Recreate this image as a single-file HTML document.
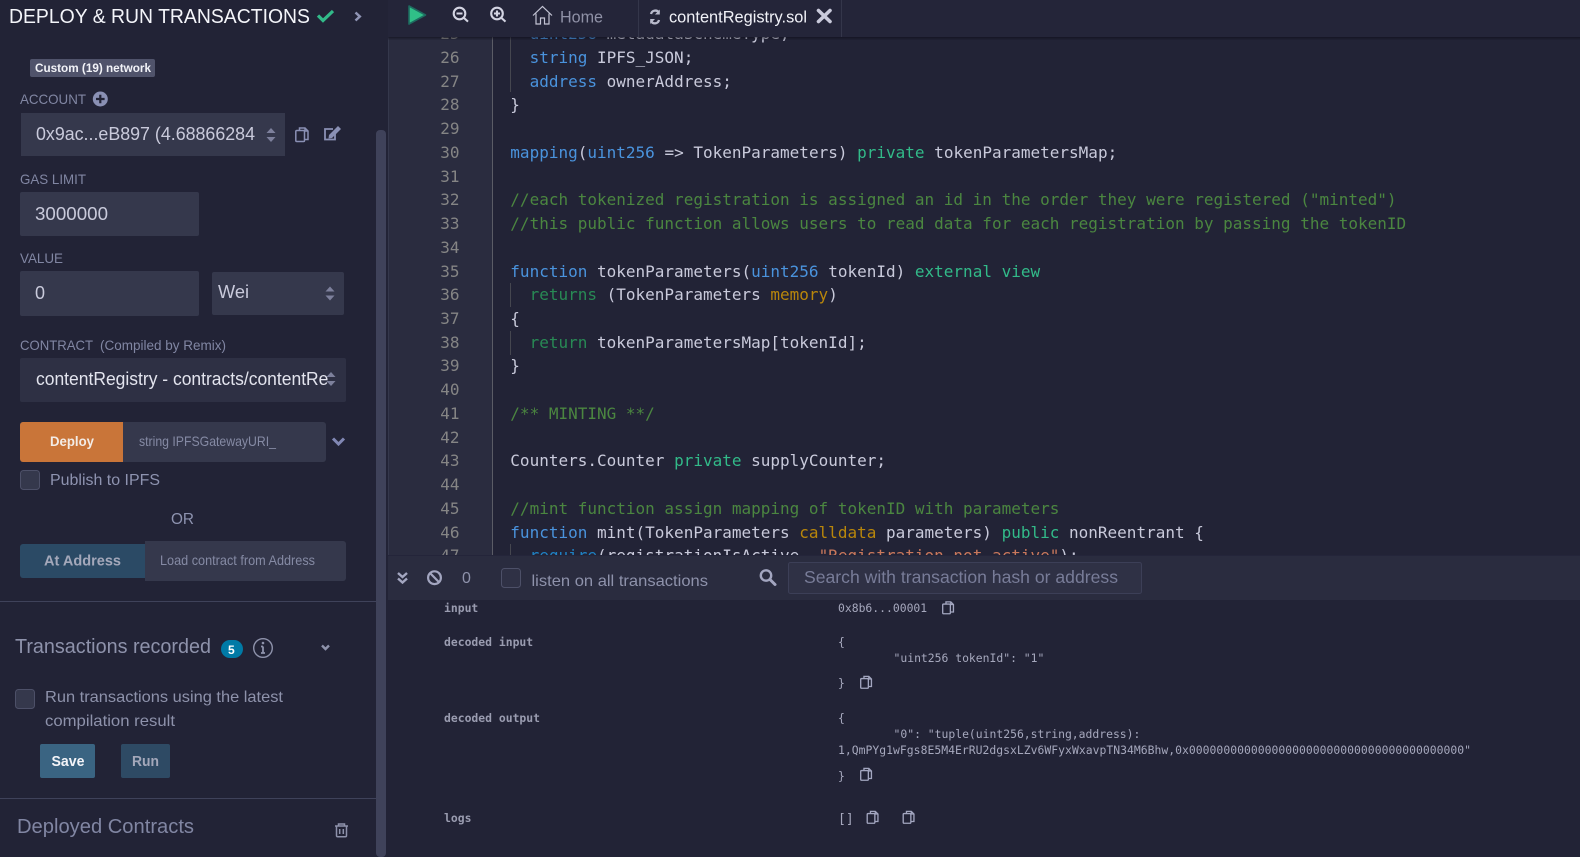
<!DOCTYPE html>
<html lang="en"><head><meta charset="utf-8"><title>Remix - Deploy &amp; Run Transactions</title>
<style>
html,body{margin:0;padding:0;background:#222336;width:1580px;height:857px;overflow:hidden}
.abs{position:absolute}
#gutter{left:388px;top:0;width:103px;height:556px;background:#2a2c3f;border-right:1px solid #5b5c66;border-left:1px solid #35384c;box-sizing:content-box}
#codewrap{left:389px;top:37px;width:1191px;height:519px;overflow:hidden}
#nums{position:absolute;left:0;top:-14.8px;width:70.5px;text-align:right;color:#858585}
#code{position:absolute;left:121.3px;top:-14.8px;color:#c9cadb}
pre{margin:0;font:16px/23.73px "DejaVu Sans Mono","Liberation Mono",monospace;white-space:pre}
.k{color:#4a93dd}.g{color:#32ba89}.r{color:#288a55}.m{color:#b8860b}.c{color:#4b8640}.s{color:#c9785c}.q{color:#1f82c4}
#guides i{position:absolute;left:510px;width:1px;background:#45464f}
svg{position:absolute;left:0;top:0}
text{font-family:"Liberation Sans",sans-serif;white-space:pre}
.mono{font-family:"DejaVu Sans Mono","Liberation Mono",monospace;font-size:11.4px;fill:#a6a8bd}
.lab{font-weight:bold;fill:#9a9cb0}
.l{fill:#8186a3;font-size:14px}
</style></head><body>
<div class="abs" id="gutter"></div>
<div id="guides"><i style="top:37px;height:55px"></i><i style="top:283px;height:24px"></i><i style="top:331px;height:24px"></i><i style="top:544px;height:12px"></i></div>
<div class="abs" id="codewrap">
<pre id="nums">25
26
27
28
29
30
31
32
33
34
35
36
37
38
39
40
41
42
43
44
45
46
47</pre>
<pre id="code">  <span class="k">uint256</span> metadataSchemeType;
  <span class="k">string</span> IPFS_JSON;
  <span class="k">address</span> ownerAddress;
}

<span class="k">mapping</span>(<span class="k">uint256</span> =&gt; TokenParameters) <span class="g">private</span> tokenParametersMap;

<span class="c">//each tokenized registration is assigned an id in the order they were registered ("minted")</span>
<span class="c">//this public function allows users to read data for each registration by passing the tokenID</span>

<span class="k">function</span> tokenParameters(<span class="k">uint256</span> tokenId) <span class="g">external</span> <span class="g">view</span>
  <span class="r">returns</span> (TokenParameters <span class="m">memory</span>)
{
  <span class="r">return</span> tokenParametersMap[tokenId];
}

<span class="c">/** MINTING **/</span>

Counters.Counter <span class="g">private</span> supplyCounter;

<span class="c">//mint function assign mapping of tokenID with parameters</span>
<span class="k">function</span> mint(TokenParameters <span class="m">calldata</span> parameters) <span class="g">public</span> nonReentrant {
  <span class="q">require</span>(registrationIsActive, <span class="s">"Registration not active"</span>);</pre>
</div>
<svg width="1580" height="857" viewBox="0 0 1580 857">
<defs>
<g id="cp" fill="none" stroke-width="1.5"><path d="M4.5 3.5V1h5.5l3 3v8.5H9.5"/><rect x=".8" y="3.5" width="8.7" height="11" rx="1"/><path d="M10 1v3h3"/></g>
<g id="ud"><path d="M-4.5 -2L0 -7L4.5 -2Z M-4.5 2L0 7L4.5 2Z"/></g>
</defs>

<!-- top bar -->
<rect x="388" y="0" width="1192" height="37" fill="#242539"/>
<rect x="388" y="37" width="1192" height="1" fill="#0c0c18" fill-opacity=".5"/>
<rect x="388" y="38" width="1192" height="1" fill="#0c0c18" fill-opacity=".3"/>
<rect x="388" y="39" width="1192" height="1" fill="#0c0c18" fill-opacity=".15"/>
<rect x="638" y="0" width="1" height="37" fill="#34364a"/>
<rect x="841" y="0" width="1" height="37" fill="#34364a"/>
<path d="M409 6L425.5 15L409 24Z" fill="#30c088" stroke="#1e6b60" stroke-width="1.6" stroke-linejoin="round"/>
<g fill="none" stroke="#d3d4e2" stroke-width="2.1"><circle cx="459.5" cy="13.5" r="5.8"/><path d="M464 18l4 3.6M456.5 13.5h6"/><circle cx="497" cy="13.5" r="5.8"/><path d="M501.5 18l4 3.6M494 13.5h6M497 10.5v6"/></g>
<path d="M533 15.5L542.5 6.5L552 15.5M536 13.5V24H540.5V18H544.5V24H549V13.5" fill="none" stroke="#c3c4d4" stroke-width="1.2"/>
<text x="560" y="22.5" font-size="16.5" fill="#8f91a6" textLength="43" lengthAdjust="spacingAndGlyphs">Home</text>
<path d="M659 12.5C657 9.5 652 10 651 14M651 21C653 24.5 658 24 659 20" fill="none" stroke="#b8bacb" stroke-width="2.3"/>
<path d="M659.8 9.5V14.5H655ZM650.2 24V19H655Z" fill="#b8bacb"/>
<text x="669" y="22.5" font-size="16.5" fill="#f1f2f8" textLength="138" lengthAdjust="spacingAndGlyphs">contentRegistry.sol</text>
<path d="M818.5 10.5L830 21.5M830 10.5L818.5 21.5" stroke="#c9cadb" stroke-width="3.6" stroke-linecap="round"/>

<!-- side panel -->
<rect x="376" y="130" width="10" height="727" rx="4" fill="#3f425a"/>
<text x="9" y="23" font-size="20" fill="#f4f5fa" textLength="301" lengthAdjust="spacingAndGlyphs">DEPLOY &amp; RUN TRANSACTIONS</text>
<path d="M318 15.5L323 20.5L333 11" fill="none" stroke="#32ba89" stroke-width="3.2"/>
<path d="M355.5 12.5L359.8 16.5L355.5 20.5" fill="none" stroke="#8f94b4" stroke-width="2.5"/>

<rect x="30" y="59" width="125" height="18" rx="2" fill="#50536b"/>
<text x="35" y="72" font-size="11.5" font-weight="bold" fill="#f2f3f8" textLength="116" lengthAdjust="spacingAndGlyphs">Custom (19) network</text>

<text x="20" y="104" class="l" textLength="66" lengthAdjust="spacingAndGlyphs">ACCOUNT</text>
<circle cx="100.3" cy="99" r="7.5" fill="#8a90b4"/><path d="M96 99h8.6M100.3 94.8v8.5" stroke="#222336" stroke-width="2.2"/>
<rect x="21" y="113" width="264" height="43" fill="#35384c"/>
<text x="36" y="140" font-size="18" fill="#c9cadb" textLength="219" lengthAdjust="spacingAndGlyphs">0x9ac...eB897 (4.68866284</text>
<use href="#ud" x="271" y="135" fill="#7d809c"/>
<use href="#cp" x="295" y="127" stroke="#8a90b4"/>
<g fill="none" stroke="#8a90b4" stroke-width="1.8"><path d="M335 132v7.5h-10V129h8"/></g><path d="M329 135l9-9 3 3-9 9-3.5.5z" fill="#8a90b4"/>

<text x="20" y="184" class="l" textLength="66" lengthAdjust="spacingAndGlyphs">GAS LIMIT</text>
<rect x="20" y="192" width="179" height="44" rx="2" fill="#35384c"/>
<text x="35" y="220" font-size="18" fill="#c9cadb" textLength="73" lengthAdjust="spacingAndGlyphs">3000000</text>

<text x="20" y="263" class="l" textLength="43" lengthAdjust="spacingAndGlyphs">VALUE</text>
<rect x="20" y="271" width="179" height="45" rx="2" fill="#35384c"/>
<text x="35" y="299" font-size="18" fill="#c9cadb">0</text>
<rect x="212" y="272" width="132" height="43" rx="2" fill="#35384c"/>
<text x="218" y="298" font-size="18" fill="#c9cadb" textLength="31" lengthAdjust="spacingAndGlyphs">Wei</text>
<use href="#ud" x="330" y="293.5" fill="#7d809c"/>

<text x="20" y="350" class="l" textLength="73" lengthAdjust="spacingAndGlyphs">CONTRACT</text>
<text x="100" y="350" font-size="13.5" fill="#8186a3" textLength="126" lengthAdjust="spacingAndGlyphs">(Compiled by Remix)</text>
<rect x="20" y="358" width="326" height="44" rx="2" fill="#2e3044"/>
<svg x="36" y="358" width="292" height="44"><text x="0" y="27" font-size="18" fill="#e3e4ee" textLength="306" lengthAdjust="spacingAndGlyphs">contentRegistry - contracts/contentRegi</text></svg>
<use href="#ud" x="331" y="379" fill="#7d809c"/>

<rect x="20" y="422" width="306" height="40" rx="3" fill="#35384c"/>
<path d="M23 422H123V462H23a3 3 0 0 1-3-3V425a3 3 0 0 1 3-3Z" fill="#c97539"/>
<text x="50" y="446" font-size="14" font-weight="bold" fill="#f3ece6" textLength="44" lengthAdjust="spacingAndGlyphs">Deploy</text>
<text x="139" y="446" font-size="14" fill="#858aa4" textLength="137" lengthAdjust="spacingAndGlyphs">string IPFSGatewayURI_</text>
<path d="M333 438.5L338.5 444L344 438.5" fill="none" stroke="#8187b4" stroke-width="3"/>

<rect x="20.5" y="470.5" width="19" height="19" rx="3" fill="#35384c" stroke="#4d5068"/>
<text x="50" y="485" font-size="16" fill="#8e93b0" textLength="110" lengthAdjust="spacingAndGlyphs">Publish to IPFS</text>
<text x="171" y="524" font-size="16" fill="#8e93b0" textLength="23" lengthAdjust="spacingAndGlyphs">OR</text>

<path d="M23 544H146V578H23a3 3 0 0 1-3-3V547a3 3 0 0 1 3-3Z" fill="#2b4a65"/>
<text x="44" y="565.5" font-size="14.5" font-weight="bold" fill="#a4a8ba" textLength="77" lengthAdjust="spacingAndGlyphs">At Address</text>
<path d="M145 541H343a3 3 0 0 1 3 3V578a3 3 0 0 1-3 3H145Z" fill="#35384c"/>
<text x="160" y="565" font-size="14" fill="#858aa4" textLength="155" lengthAdjust="spacingAndGlyphs">Load contract from Address</text>

<rect x="0" y="601" width="376" height="1" fill="#3f425a"/>
<text x="15" y="653" font-size="20" fill="#8e92ab" textLength="196" lengthAdjust="spacingAndGlyphs">Transactions recorded</text>
<rect x="221" y="640" width="22" height="18" rx="9" fill="#007aa6"/>
<text x="228" y="654" font-size="12" font-weight="bold" fill="#fff">5</text>
<circle cx="263" cy="648" r="9.3" fill="none" stroke="#8e92ab" stroke-width="1.4"/>
<path d="M263 646.5v6M261 653h4M261 646.5h2" fill="none" stroke="#8e92ab" stroke-width="1.8"/><circle cx="263" cy="643" r="1.3" fill="#8e92ab"/>
<path d="M322 645.5L325.5 649L329 645.5" fill="none" stroke="#8e92ab" stroke-width="2.4"/>

<rect x="15.5" y="689.5" width="19" height="19" rx="3" fill="#35384c" stroke="#4d5068"/>
<text x="45" y="702" font-size="16" fill="#8e92ab" textLength="238" lengthAdjust="spacingAndGlyphs">Run transactions using the latest</text>
<text x="45" y="726" font-size="16" fill="#8e92ab" textLength="130" lengthAdjust="spacingAndGlyphs">compilation result</text>
<rect x="40" y="744" width="55" height="34" rx="2" fill="#3a6482"/>
<text x="51.5" y="766" font-size="15" font-weight="bold" fill="#f3f4f8" textLength="33" lengthAdjust="spacingAndGlyphs">Save</text>
<rect x="121" y="744" width="49" height="34" rx="2" fill="#2e4a64"/>
<text x="132" y="766" font-size="15" font-weight="bold" fill="#a4a8ba" textLength="27" lengthAdjust="spacingAndGlyphs">Run</text>
<rect x="0" y="798" width="376" height="1" fill="#3f425a"/>
<text x="17" y="833" font-size="20" fill="#8186a3" textLength="177" lengthAdjust="spacingAndGlyphs">Deployed Contracts</text>
<g fill="none" stroke="#8e92ab" stroke-width="1.5"><path d="M335 826h13M338.5 826v-2h6v2M336.5 826v9.5a1.2 1.2 0 0 0 1.2 1.2h7.6a1.2 1.2 0 0 0 1.2-1.2V826M339.7 829v5M343.3 829v5"/></g>

<!-- terminal -->
<rect x="388" y="556" width="1192" height="44" fill="#2a2c3f"/>
<rect x="388" y="555" width="1192" height="1" fill="#24253a"/>
<path d="M398 573L402.5 577L407 573M398 578.5L402.5 582.5L407 578.5" fill="none" stroke="#a3a6c0" stroke-width="2.4"/>
<circle cx="434.5" cy="577.7" r="6.4" fill="none" stroke="#a3a6c0" stroke-width="2.2"/><path d="M430 573l9.2 9.4" stroke="#a3a6c0" stroke-width="2.2"/>
<text x="462" y="583" font-size="16" fill="#8e92ab">0</text>
<rect x="501.5" y="568.5" width="19" height="19" rx="3" fill="#2f3145" stroke="#4d5068"/>
<text x="531.5" y="586" font-size="16" fill="#8e92ab" textLength="176.5" lengthAdjust="spacingAndGlyphs">listen on all transactions</text>
<circle cx="766" cy="575.5" r="5.2" fill="none" stroke="#a3a6c0" stroke-width="2.4"/><path d="M770 579.5l5 5" stroke="#a3a6c0" stroke-width="3" stroke-linecap="round"/>
<rect x="788.5" y="562.5" width="353" height="31" rx="2" fill="#2f3145" stroke="#3c3f57"/>
<text x="804" y="583" font-size="17.5" fill="#787c98" textLength="314" lengthAdjust="spacingAndGlyphs">Search with transaction hash or address</text>

<text x="444" y="612" class="mono lab">input</text>
<text x="444" y="646" class="mono lab">decoded input</text>
<text x="444" y="722" class="mono lab">decoded output</text>
<text x="444" y="822" class="mono lab">logs</text>
<text x="838" y="612" class="mono">0x8b6...00001</text>
<use href="#cp" transform="translate(942 601) scale(.88)" stroke="#a3a6c0"/>
<text x="838" y="646" class="mono">{</text>
<text x="893.5" y="662" class="mono">"uint256 tokenId": "1"</text>
<text x="838" y="687" class="mono">}</text>
<use href="#cp" transform="translate(860 675.5) scale(.88)" stroke="#a3a6c0"/>
<text x="838" y="722" class="mono">{</text>
<text x="893.5" y="738" class="mono">"0": "tuple(uint256,string,address):</text>
<text x="838" y="754" class="mono" textLength="633" lengthAdjust="spacing">1,QmPYg1wFgs8E5M4ErRU2dgsxLZv6WFyxWxavpTN34M6Bhw,0x0000000000000000000000000000000000000000"</text>
<text x="838" y="780" class="mono">}</text>
<use href="#cp" transform="translate(860 767.5) scale(.88)" stroke="#a3a6c0"/>
<text x="838" y="823" class="mono" font-size="13" style="font-size:13px">[]</text>
<use href="#cp" transform="translate(866.5 810.5) scale(.88)" stroke="#a3a6c0"/>
<use href="#cp" transform="translate(902.5 810.5) scale(.88)" stroke="#a3a6c0"/>
</svg>
</body></html>
